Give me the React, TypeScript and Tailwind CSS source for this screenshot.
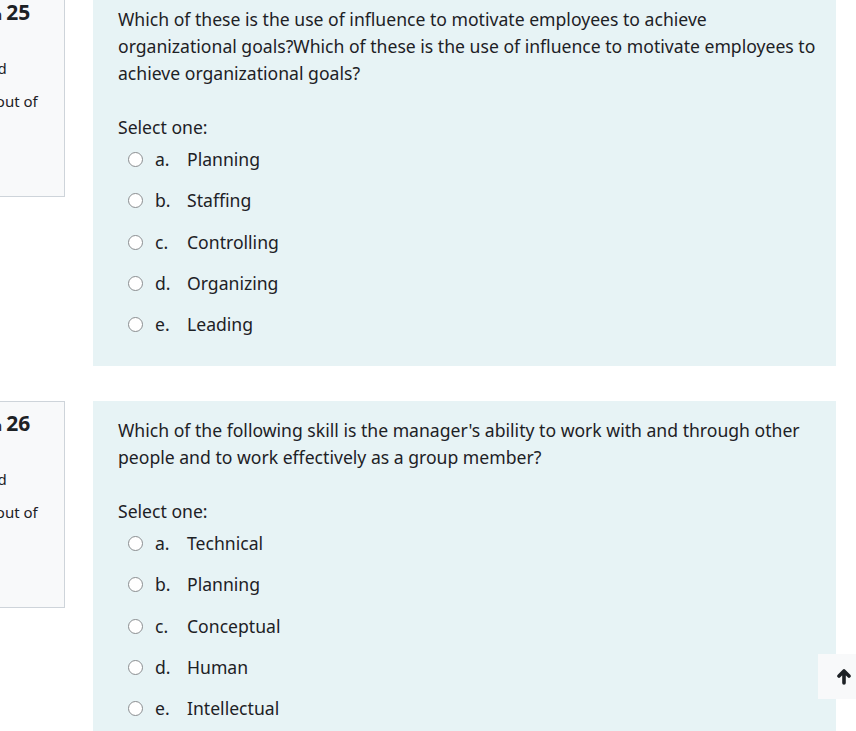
import React from 'react';

type Question = {
  num: number;
  text: string;
  options: string[];
};

const questions: Question[] = [
  {
    num: 25,
    text: 'Which of these is the use of influence to motivate employees to achieve organizational goals?Which of these is the use of influence to motivate employees to achieve organizational goals?',
    options: ['Planning', 'Staffing', 'Controlling', 'Organizing', 'Leading'],
  },
  {
    num: 26,
    text: "Which of the following skill is the manager's ability to work with and through other people and to work effectively as a group member?",
    options: ['Technical', 'Planning', 'Conceptual', 'Human', 'Intellectual'],
  },
];

const letters = ['a.', 'b.', 'c.', 'd.', 'e.'];

function InfoBox({ num }: { num: number }) {
  return (
    <div className="ml-[-73px] w-[138px] shrink-0 self-start bg-[#f8f9fa] border border-[#ced4da] pl-[10px] pr-[14px] pt-[7px] pb-[9px] text-[15px] leading-[22px] text-[#1d2125]">
      <h3 className="text-[15px] leading-[28px] whitespace-nowrap">
        Question <span className="text-[21px] font-bold">{num}</span>
      </h3>
      <div className="mt-[7px]">Not yet answered</div>
      <div className="mt-[11px]">Marked out of 1.00</div>
      <div className="mt-[9px]">
        <svg className="inline-block mr-[4px] align-[-2px]" width="16" height="16" viewBox="0 0 16 16" fill="none" stroke="#8a8d90" strokeWidth="1.5">
          <path d="M3 15V2M3 2h9l-2 3.5 2 3.5H3" />
        </svg>
        Flag question
      </div>
    </div>
  );
}

function QuestionCard({ q }: { q: Question }) {
  return (
    <div className="flex gap-[28px]">
      <InfoBox num={q.num} />
      <div className="w-[743px] shrink-0 bg-[#e7f3f5] pl-[25px] pr-[17px] pt-[16px] pb-[28px] text-[#1d2125]">
        <p className="text-[17.6px] leading-[27px]">{q.text}</p>
        <p className="mt-[27px] text-[17.6px] leading-[27px]">Select one:</p>
        <div className="mt-[5px] flex flex-col gap-[14.25px]">
          {q.options.map((opt, i) => (
            <label key={opt} className="flex items-center text-[17.6px] leading-[27px]">
              <span className="ml-[10px] w-[15px] h-[15px] rounded-full border-[1.5px] border-[#8a8d90] bg-white" />
              <span className="ml-[12px] w-[32px]">{letters[i]}</span>
              <span>{opt}</span>
            </label>
          ))}
        </div>
      </div>
    </div>
  );
}

export default function App() {
  return (
    <div className="relative h-[731px] w-[856px] overflow-hidden bg-white" style={{ fontFamily: '"Noto Sans", "Open Sans", sans-serif' }}>
      <div className="mt-[-10px] flex flex-col gap-[35px]">
        {questions.map(q => (
          <QuestionCard key={q.num} q={q} />
        ))}
      </div>
      <button className="absolute left-[818px] top-[654px] w-[48px] h-[45px] bg-[#f8f9fa] flex items-center pl-[19px]">
        <svg width="14" height="17" viewBox="0 0 14 17" fill="none" stroke="#1d2125" strokeWidth="3.6" strokeLinecap="round" strokeLinejoin="round">
          <path d="M7 15V3M2 8l5-5 5 5" />
        </svg>
      </button>
    </div>
  );
}
